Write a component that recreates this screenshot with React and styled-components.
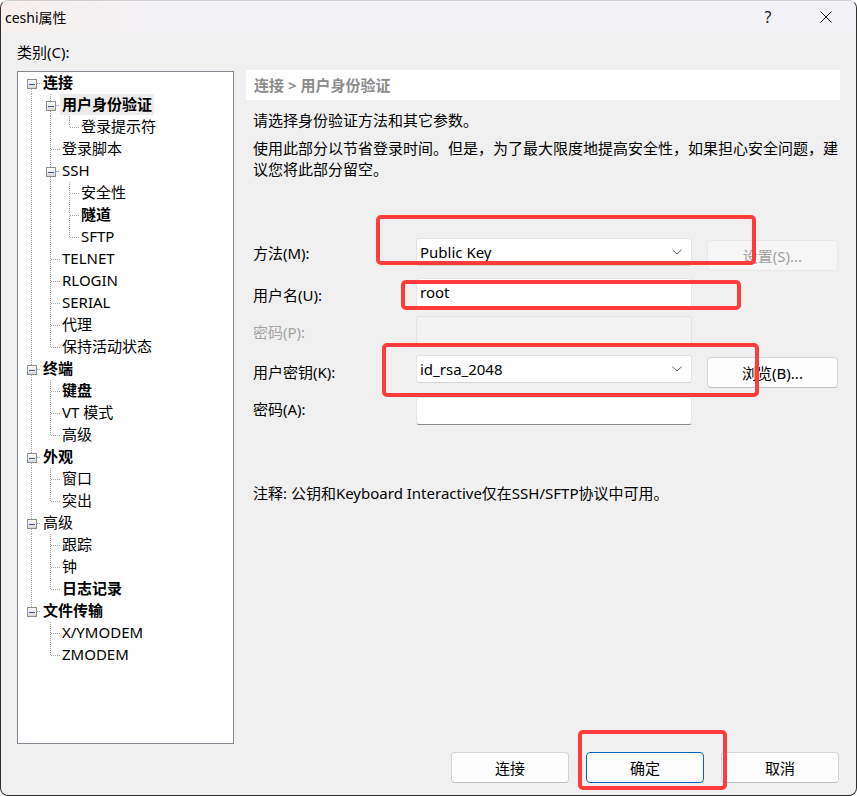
import React from "react";
import styled, { createGlobalStyle, css } from "styled-components";

const FONT = `"Noto Sans", "Noto Sans CJK SC", sans-serif`;

const GlobalStyle = createGlobalStyle`
  html, body { margin: 0; padding: 0; background: #ffffff; }
  * { box-sizing: border-box; }
  body { font-family: ${FONT}; font-size: 15px; color: #000; }
`;

const tree = [
  {
    label: "连接",
    bold: true,
    children: [
      { label: "用户身份验证", bold: true, selected: true, children: [{ label: "登录提示符" }] },
      { label: "登录脚本" },
      { label: "SSH", children: [{ label: "安全性" }, { label: "隧道", bold: true }, { label: "SFTP" }] },
      { label: "TELNET" },
      { label: "RLOGIN" },
      { label: "SERIAL" },
      { label: "代理" },
      { label: "保持活动状态" },
    ],
  },
  {
    label: "终端",
    bold: true,
    children: [{ label: "键盘", bold: true }, { label: "VT 模式" }, { label: "高级" }],
  },
  { label: "外观", bold: true, children: [{ label: "窗口" }, { label: "突出" }] },
  { label: "高级", children: [{ label: "跟踪" }, { label: "钟" }, { label: "日志记录", bold: true }] },
  { label: "文件传输", bold: true, children: [{ label: "X/YMODEM" }, { label: "ZMODEM" }] },
];

// flatten the tree into rows, remembering which ancestor lines keep going
const flatten = (nodes, level = 0, guides = [], out = []) => {
  nodes.forEach((n, i) => {
    const last = i === nodes.length - 1;
    out.push({ ...n, level, guides, last, first: level === 0 && i === 0 });
    if (n.children) flatten(n.children, level + 1, [...guides, !last], out);
  });
  return out;
};
const rows = flatten(tree);

const Window = styled.div`
  position: relative;
  width: 857px;
  height: 796px;
  display: flex;
  flex-direction: column;
  background: #f0f0f0;
  border: 1px solid #2e2e2e;
  border-top-color: #cfcfd4;
  border-radius: 8px;
  overflow: hidden;
`;

const TitleBar = styled.div`
  height: 31px;
  display: flex;
  align-items: center;
  padding-left: 4px;
  background: linear-gradient(90deg, #f7f0ee 0%, #f3f3f7 22%, #f3f3f7 100%);
  font-size: 14px;
`;

const Title = styled.span`
  flex: 1;
`;

const CaptionButton = styled.div`
  width: ${(p) => p.$w}px;
  height: 31px;
  display: flex;
  align-items: center;
  justify-content: center;
  font-size: 16px;
  color: #1a1a1a;
`;

const Body = styled.div`
  flex: 1;
  padding: 0 16px 0 16px;
`;

const Top = styled.div`
  display: flex;
  gap: 12px;
  height: 712px;
`;

const LeftCol = styled.div`
  width: 217px;
  display: flex;
  flex-direction: column;
`;

const CategoryLabel = styled.div`
  margin-top: 10px;
  line-height: 20px;
`;

const TreePanel = styled.div`
  margin-top: 9px;
  height: 673px;
  background: #fff;
  border: 1px solid #828790;
  padding-left: 4px;
`;

const TreeRow = styled.div`
  height: 22px;
  display: flex;
`;

const Cell = styled.svg`
  width: 19px;
  height: 22px;
  flex-shrink: 0;
  display: block;
`;

const TreeLabel = styled.span`
  height: 21px;
  line-height: 21px;
  padding: 0 2px;
  white-space: nowrap;
  font-weight: ${(p) => (p.$bold ? 700 : 400)};
  background: ${(p) => (p.$selected ? "#ececec" : "transparent")};
`;

const RightCol = styled.div`
  width: 594px;
  padding-top: 38px;
`;

const Header = styled.div`
  height: 30px;
  line-height: 30px;
  padding-left: 8px;
  background: #fff;
  color: #8c8c8c;
  font-weight: 700;
`;

const Para = styled.div`
  margin-top: ${(p) => p.$mt}px;
  padding-left: 7px;
  line-height: 21px;
  white-space: nowrap;
`;

const Form = styled.div`
  margin-top: 58px;
  padding-left: 7px;
`;

const FormRow = styled.div`
  display: flex;
  align-items: flex-start;
  height: ${(p) => p.$h}px;
  margin-top: ${(p) => p.$mt}px;
`;

const Label = styled.div`
  width: 163px;
  line-height: ${(p) => p.$lh}px;
  color: ${(p) => (p.$disabled ? "#a2a2a2" : "#000")};
`;

const Combo = styled.div`
  width: 276px;
  height: 28px;
  display: flex;
  align-items: center;
  justify-content: space-between;
  padding: 0 9px 0 3px;
  background: #fff;
  border: 1px solid #e3e3e3;
  border-bottom-color: #d2d2d2;
  border-radius: 3px;
`;

const TextBox = styled.div`
  width: 276px;
  height: ${(p) => p.$h}px;
  padding: 0 3px;
  line-height: ${(p) => p.$h - 5}px;
  background: ${(p) => (p.$disabled ? "#f3f3f3" : "#fff")};
  border: 1px solid ${(p) => (p.$disabled ? "#e2e2e2" : "#e6e6e6")};
  border-bottom-color: ${(p) => (p.$disabled ? "#e2e2e2" : "#8a8a8a")};
  border-radius: 3px;
`;

const Button = styled.div`
  width: ${(p) => p.$w || 118}px;
  height: 31px;
  margin-top: ${(p) => p.$mt || 0}px;
  margin-left: ${(p) => p.$ml || 0}px;
  display: flex;
  align-items: center;
  justify-content: center;
  background: #fdfdfd;
  border: 1px solid #d3d3d3;
  border-bottom-color: #bfbfbf;
  border-radius: 4px;
  ${(p) =>
    p.$primary &&
    css`
      border-color: #0067c0;
    `}
  ${(p) =>
    p.$disabled &&
    css`
      background: #f6f6f6;
      border-color: #e8e8e8;
      color: #a0a0a0;
    `}
`;

const Note = styled.div`
  margin-top: 58px;
  padding-left: 7px;
  line-height: 21px;
  white-space: nowrap;
`;

const Footer = styled.div`
  margin-top: 8px;
  display: flex;
  justify-content: flex-end;
  gap: 17px;
  padding-right: 1px;
`;

const Annotation = styled.div`
  position: absolute;
  left: ${(p) => p.$x - 1}px;
  top: ${(p) => p.$y - 1}px;
  width: ${(p) => p.$w}px;
  height: ${(p) => p.$h}px;
  border: 4px solid #ff3b3b;
  border-radius: 5px;
  pointer-events: none;
`;

const DOT = "#a0a0a0";

const GuideCell = ({ on }) => (
  <Cell viewBox="0 0 19 22" shapeRendering="crispEdges">
    {on && <line x1="9.5" y1="0" x2="9.5" y2="22" stroke={DOT} strokeDasharray="1 1" />}
  </Cell>
);

const ConnectorCell = ({ row }) => {
  const box = !!row.children;
  return (
    <Cell viewBox="0 0 19 22" shapeRendering="crispEdges">
      {!row.first && (
        <line x1="9.5" y1="0" x2="9.5" y2={box ? 7 : 12} stroke={DOT} strokeDasharray="1 1" />
      )}
      {!row.last && (
        <line x1="9.5" y1={box ? 17 : 12} x2="9.5" y2="22" stroke={DOT} strokeDasharray="1 1" />
      )}
      <line x1={box ? 15 : 10} y1="11.5" x2="19" y2="11.5" stroke={DOT} strokeDasharray="1 1" />
      {box && (
        <>
          <defs>
            <linearGradient id="exp" x1="0" y1="0" x2="0" y2="1">
              <stop offset="0" stopColor="#ffffff" />
              <stop offset="1" stopColor="#d6d6d6" />
            </linearGradient>
          </defs>
          <rect x="5.5" y="7.5" width="9" height="9" fill="url(#exp)" stroke="#8e8f8f" />
          <line x1="7" y1="12" x2="13" y2="12" stroke="#3d5b99" />
        </>
      )}
    </Cell>
  );
};

const Chevron = () => (
  <svg width="10" height="6" viewBox="0 0 10 6">
    <path d="M0.5 0.8 L5 5 L9.5 0.8" fill="none" stroke="#5f5f5f" strokeWidth="1" />
  </svg>
);

const CloseIcon = () => (
  <svg width="12" height="12" viewBox="0 0 12 12">
    <path d="M0.5 0.5 L11.5 11.5 M11.5 0.5 L0.5 11.5" stroke="#1a1a1a" strokeWidth="1" />
  </svg>
);

export default function App() {
  return (
    <>
      <GlobalStyle />
      <Window>
        <TitleBar>
          <Title>ceshi属性</Title>
          <CaptionButton $w={56}>?</CaptionButton>
          <CaptionButton $w={60}>
            <CloseIcon />
          </CaptionButton>
        </TitleBar>
        <Body>
          <Top>
            <LeftCol>
              <CategoryLabel>类别(C):</CategoryLabel>
              <TreePanel>
                {rows.map((r, i) => (
                  <TreeRow key={i}>
                    {r.guides.map((g, j) => (
                      <GuideCell key={j} on={g} />
                    ))}
                    <ConnectorCell row={r} />
                    <TreeLabel $bold={r.bold} $selected={r.selected}>
                      {r.label}
                    </TreeLabel>
                  </TreeRow>
                ))}
              </TreePanel>
            </LeftCol>
            <RightCol>
              <Header>连接 &gt; 用户身份验证</Header>
              <Para $mt={10}>请选择身份验证方法和其它参数。</Para>
              <Para $mt={7}>
                使用此部分以节省登录时间。但是，为了最大限度地提高安全性，如果担心安全问题，建
                <br />
                议您将此部分留空。
              </Para>
              <Form>
                <FormRow $h={34} $mt={0}>
                  <Label $lh={30}>方法(M):</Label>
                  <Combo>
                    <span>Public Key</span>
                    <Chevron />
                  </Combo>
                  <Button $w={131} $mt={2} $ml={15} $disabled>
                    设置(S)...
                  </Button>
                </FormRow>
                <FormRow $h={32} $mt={6}>
                  <Label $lh={34}>用户名(U):</Label>
                  <TextBox $h={32}>root</TextBox>
                </FormRow>
                <FormRow $h={31} $mt={6}>
                  <Label $lh={32} $disabled>
                    密码(P):
                  </Label>
                  <TextBox $h={31} $disabled />
                </FormRow>
                <FormRow $h={34} $mt={8}>
                  <Label $lh={34}>用户密钥(K):</Label>
                  <Combo>
                    <span>id_rsa_2048</span>
                    <Chevron />
                  </Combo>
                  <Button $w={131} $mt={2} $ml={15}>
                    浏览(B)...
                  </Button>
                </FormRow>
                <FormRow $h={28} $mt={8}>
                  <Label $lh={24}>密码(A):</Label>
                  <TextBox $h={28} />
                </FormRow>
              </Form>
              <Note>注释: 公钥和Keyboard Interactive仅在SSH/SFTP协议中可用。</Note>
            </RightCol>
          </Top>
          <Footer>
            <Button>连接</Button>
            <Button $primary>确定</Button>
            <Button>取消</Button>
          </Footer>
        </Body>
        <Annotation $x={376} $y={215} $w={380} $h={50} />
        <Annotation $x={401} $y={280} $w={340} $h={30} />
        <Annotation $x={382} $y={343} $w={377} $h={54} />
        <Annotation $x={578} $y={730} $w={149} $h={60} />
      </Window>
    </>
  );
}
